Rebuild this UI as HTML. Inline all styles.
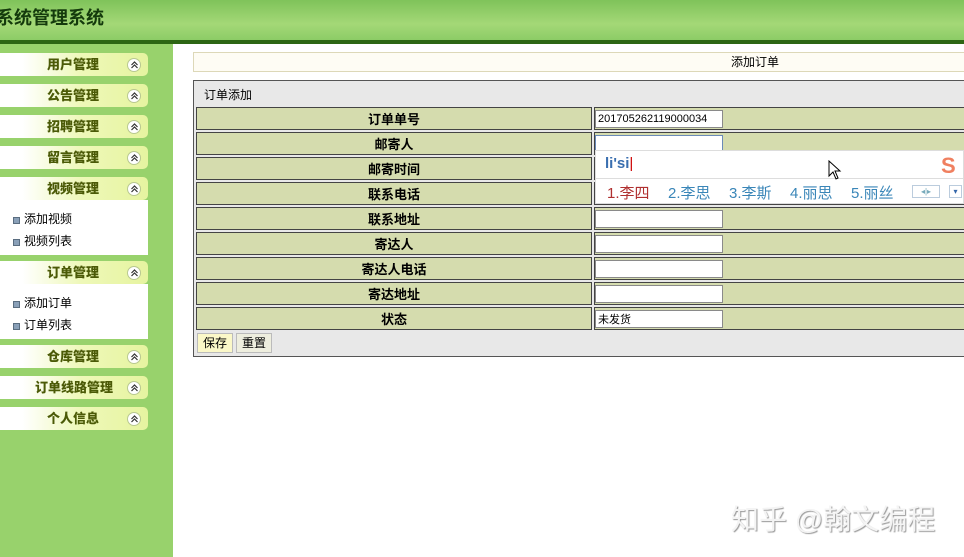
<!DOCTYPE html>
<html><head><meta charset="utf-8"><style>
*{margin:0;padding:0;box-sizing:border-box}
body{width:964px;height:557px;overflow:hidden;background:#fff;font-family:"Liberation Sans","Noto Sans CJK SC",sans-serif;font-size:12px;position:relative}
.hdr{position:absolute;left:0;top:0;width:964px;height:40px;background:linear-gradient(#7fc35a,#a4d877 60%,#8ccc66)}
.hdr span{position:absolute;left:-4px;top:4px;font-size:18px;font-weight:bold;color:#143a0c;font-family:"Noto Sans CJK SC",sans-serif}
.bar{position:absolute;left:0;top:40px;width:964px;height:4px;background:#2d6614}
.side{position:absolute;left:0;top:44px;width:173px;height:513px;background:#98d26c}
.m{position:absolute;left:0;width:148px;height:23px;background:linear-gradient(90deg,#fff 15%,#eef8b8 55%,#e6f4a0);border-radius:0 5px 5px 0;font-weight:bold;font-size:13px;color:#4b5a07;line-height:23px}
.m b{position:absolute;left:47px}
.m i{position:absolute;left:127px;top:5px;width:14px;height:14px;border-radius:50%;background:#fff;border:1px solid #b8c890}
.m i svg{position:absolute;left:3px;top:2px}
.sub{position:absolute;left:0;width:148px;background:#fff}
.sub div{height:22px;line-height:22px;padding-left:24px;font-size:12px;position:relative;color:#000}
.sub div:before{content:"";position:absolute;left:13px;top:9px;width:5px;height:5px;background:#8aa0b8;border:1px solid #5a6d80}
.title{position:absolute;left:193px;top:52px;width:780px;height:20px;background:#fefcf4;border:1px solid #ddd8b8;text-align:center;line-height:18px}
.title span{position:absolute;left:537px}
table{position:absolute;left:193px;top:80px;width:790px;border-collapse:separate;border-spacing:2px;border:1px solid #555;background:#e8e8e8}
td{height:23px;border:1px solid #444;background:#d5dcae;font-size:12px}
td.l{width:396px;text-align:center;font-weight:bold;font-size:13px}
td.h{background:#e8e8e8;border:none;padding-left:8px;height:22px}
input{width:128px;height:18px;border:1px solid #8a8a8a;background:#fff;font-size:11px;padding-left:2px;font-family:"Liberation Sans",sans-serif}
.btn{display:inline-block;height:20px;padding:0 5px;line-height:18px;border:1px solid #bbb;font-size:12px;margin-right:3px}
.ime{position:absolute;left:595px;top:150px;width:369px;height:54px;background:#fff;border:1px solid #ddd}
.ime .py{position:absolute;left:9px;top:4px;font-weight:bold;font-size:15px;color:#3a6fb0}
.ime .ln{position:absolute;left:0;top:27px;width:369px;border-top:1px solid #ddd}
.ime .c{position:absolute;top:31px;font-size:15px;color:#3a86b8;font-family:"Liberation Sans","Noto Sans CJK SC",sans-serif}
.wm{position:absolute;left:731px;top:498px;font-size:28px;color:#f4f4f4;text-shadow:1px 1px 1px #999}
</style></head><body>
<div class="hdr"><span>系统管理系统</span></div>
<div class="bar"></div>
<div class="side"></div>
<div class="m" style="top:53px"><b>用户管理</b><i><svg width="7" height="8"><path d="M0.5 4L3.5 1L6.5 4M0.5 7L3.5 4L6.5 7" stroke="#333" fill="none" stroke-width="1.2"/></svg></i></div>
<div class="m" style="top:84px"><b>公告管理</b><i><svg width="7" height="8"><path d="M0.5 4L3.5 1L6.5 4M0.5 7L3.5 4L6.5 7" stroke="#333" fill="none" stroke-width="1.2"/></svg></i></div>
<div class="m" style="top:115px"><b>招聘管理</b><i><svg width="7" height="8"><path d="M0.5 4L3.5 1L6.5 4M0.5 7L3.5 4L6.5 7" stroke="#333" fill="none" stroke-width="1.2"/></svg></i></div>
<div class="m" style="top:146px"><b>留言管理</b><i><svg width="7" height="8"><path d="M0.5 4L3.5 1L6.5 4M0.5 7L3.5 4L6.5 7" stroke="#333" fill="none" stroke-width="1.2"/></svg></i></div>
<div class="m" style="top:177px"><b>视频管理</b><i><svg width="7" height="8"><path d="M0.5 4L3.5 1L6.5 4M0.5 7L3.5 4L6.5 7" stroke="#333" fill="none" stroke-width="1.2"/></svg></i></div>
<div class="sub" style="top:200px;height:55px;padding-top:8px"><div>添加视频</div><div>视频列表</div></div>
<div class="m" style="top:261px"><b>订单管理</b><i><svg width="7" height="8"><path d="M0.5 4L3.5 1L6.5 4M0.5 7L3.5 4L6.5 7" stroke="#333" fill="none" stroke-width="1.2"/></svg></i></div>
<div class="sub" style="top:284px;height:55px;padding-top:8px"><div>添加订单</div><div>订单列表</div></div>
<div class="m" style="top:345px"><b>仓库管理</b><i><svg width="7" height="8"><path d="M0.5 4L3.5 1L6.5 4M0.5 7L3.5 4L6.5 7" stroke="#333" fill="none" stroke-width="1.2"/></svg></i></div>
<div class="m" style="top:376px"><b style="left:35px">订单线路管理</b><i><svg width="7" height="8"><path d="M0.5 4L3.5 1L6.5 4M0.5 7L3.5 4L6.5 7" stroke="#333" fill="none" stroke-width="1.2"/></svg></i></div>
<div class="m" style="top:407px"><b>个人信息</b><i><svg width="7" height="8"><path d="M0.5 4L3.5 1L6.5 4M0.5 7L3.5 4L6.5 7" stroke="#333" fill="none" stroke-width="1.2"/></svg></i></div>
<div class="title"><span>添加订单</span></div>
<table>
<tr><td class="h" colspan="2">订单添加</td></tr>
<tr><td class="l">订单单号</td><td><input value="201705262119000034"></td></tr>
<tr><td class="l">邮寄人</td><td><input style="border-color:#6a8ab8"></td></tr>
<tr><td class="l">邮寄时间</td><td><input></td></tr>
<tr><td class="l">联系电话</td><td><input></td></tr>
<tr><td class="l">联系地址</td><td><input></td></tr>
<tr><td class="l">寄达人</td><td><input></td></tr>
<tr><td class="l">寄达人电话</td><td><input></td></tr>
<tr><td class="l">寄达地址</td><td><input></td></tr>
<tr><td class="l">状态</td><td><input value="未发货"></td></tr>
<tr><td class="h" colspan="2" style="padding-left:1px"><span class="btn" style="background:#fbf8c8">保存</span><span class="btn" style="background:#eeeede">重置</span></td></tr>
</table>
<div class="ime"><div class="py">li'si<span style="color:#c00;font-weight:normal">|</span></div><div class="ln"></div>
<span class="c" style="left:11px;color:#b03030">1.李四</span><span class="c" style="left:72px">2.李思</span><span class="c" style="left:133px">3.李斯</span><span class="c" style="left:194px">4.丽思</span><span class="c" style="left:255px">5.丽丝</span>
<span style="position:absolute;left:345px;top:2px;color:#f08060;font-weight:bold;font-size:22px">S</span>
<span style="position:absolute;left:316px;top:34px;width:28px;height:13px;border:1px solid #bcd;font-size:8px;color:#7ab;text-align:center;line-height:11px">◂|▸</span>
<span style="position:absolute;left:353px;top:34px;width:13px;height:13px;border:1px solid #bcd;font-size:8px;color:#36a;text-align:center;line-height:11px">▾</span>
<svg style="position:absolute;left:232px;top:9px" width="14" height="20"><path d="M1 1L1 16L5 12L8 19L10 18L7 11L12 11Z" fill="#fff" stroke="#000"/></svg>
</div>
<div class="wm">知乎 @翰文编程</div>
</body></html>
